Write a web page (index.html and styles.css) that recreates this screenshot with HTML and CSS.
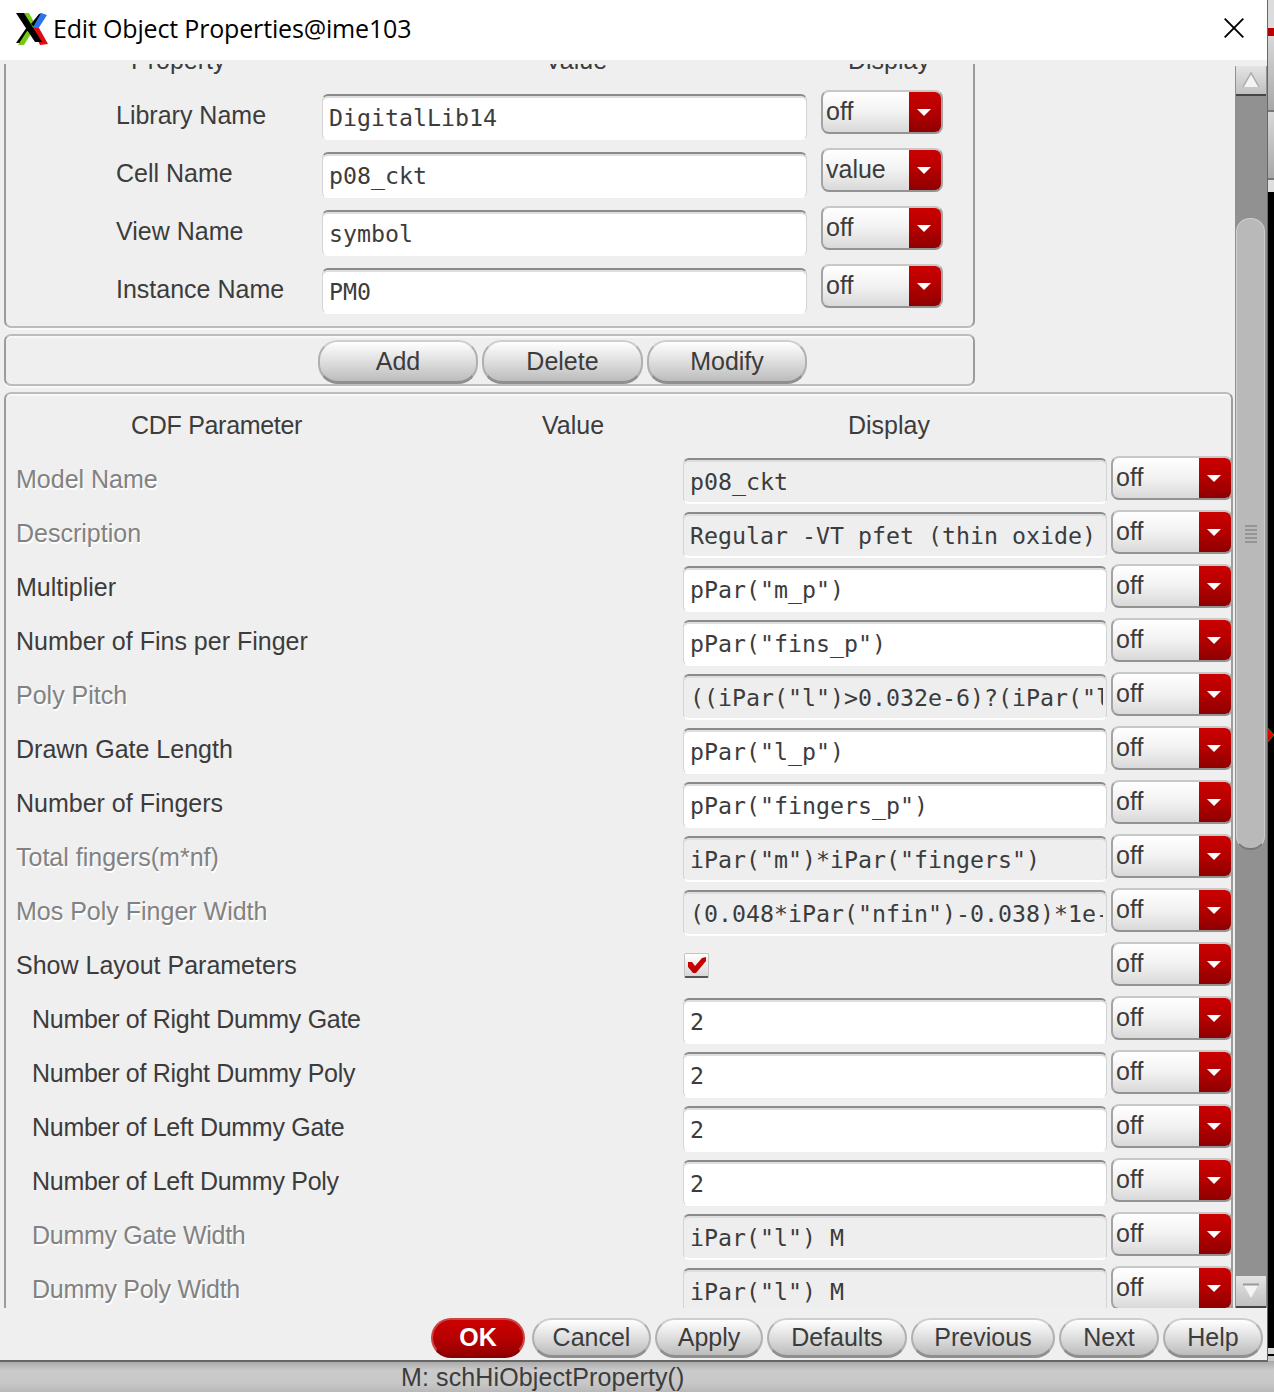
FILE: index.html
```
<!DOCTYPE html>
<html lang="en">
<head>
    <meta charset="UTF-8">
    <title>Edit Object Properties</title>
    <link rel="stylesheet" href="styles.css">
</head>
<body>
    <div class="desktop">
        <!-- Main window showing behind the dialog -->
        <div class="behind">
            <div class="behind-menu"></div>
            <div class="behind-red"></div>
            <div class="behind-tools"></div>
            <div class="behind-tools second"></div>
            <div class="behind-gap"></div>
            <div class="behind-canvas">
                <svg width="8" height="20" viewBox="0 0 8 20"><path d="M0 1L8 10L0 19Z" fill="#e00000" stroke="#2c8a3c"/></svg>
            </div>
            <div class="behind-edge"></div>
        </div>
        <div class="status-bar">M: schHiObjectProperty()</div>

        <div class="window">
            <div class="title-bar">
                <svg class="logo" width="32" height="32" viewBox="0 0 32 32">
                    <path d="M6 0H13L19 11L15 16Z" fill="#74cc10"/>
                    <path d="M0 30L11 14L15 20L6 30Z" fill="#000"/>
                    <path d="M11 18L16 19L8 32H2Z" fill="#74cc10"/>
                    <path d="M23 1L26 0L18 14L15 11Z" fill="#000"/>
                    <path d="M25 0L31 2L22 16H16Z" fill="#2a74ee"/>
                    <path d="M16 15H23L32 31L24 32Z" fill="#e00b12"/>
                    <path d="M0 0H8L26 29H19Z" fill="#000"/>
                </svg>
                <span class="title">Edit Object Properties@ime103</span>
                <svg class="close" width="20" height="20" viewBox="0 0 20 20"><path d="M.7.7L19.3 19.3M19.3.7L.7 19.3" stroke="#000" stroke-width="1.9"/></svg>
            </div>

            <div class="content">
                <div class="scroll-area">
                    <!-- Instance properties -->
                    <div class="group props">
                        <div class="head"><span>Property</span><span class="head-value">Value</span><span>Display</span></div>
                        <div class="row"><label>Library Name</label><div class="field"><span>DigitalLib14</span></div><div class="combo">off<i></i></div></div>
                        <div class="row"><label>Cell Name</label><div class="field"><span>p08_ckt</span></div><div class="combo">value<i></i></div></div>
                        <div class="row"><label>View Name</label><div class="field"><span>symbol</span></div><div class="combo">off<i></i></div></div>
                        <div class="row"><label>Instance Name</label><div class="field"><span>PM0</span></div><div class="combo">off<i></i></div></div>
                    </div>

                    <div class="group actions">
                        <button>Add</button>
                        <button>Delete</button>
                        <button>Modify</button>
                    </div>

                    <!-- CDF parameters -->
                    <div class="group cdf">
                        <div class="head"><span>CDF Parameter</span><span>Value</span><span>Display</span></div>
                        <div class="row disabled"><label>Model Name</label><div class="field"><span>p08_ckt</span></div><div class="combo">off<i></i></div></div>
                        <div class="row disabled"><label>Description</label><div class="field"><span>Regular -VT pfet (thin oxide)</span></div><div class="combo">off<i></i></div></div>
                        <div class="row"><label>Multiplier</label><div class="field"><span>pPar("m_p")</span></div><div class="combo">off<i></i></div></div>
                        <div class="row"><label>Number of Fins per Finger</label><div class="field"><span>pPar("fins_p")</span></div><div class="combo">off<i></i></div></div>
                        <div class="row disabled"><label>Poly Pitch</label><div class="field"><span>((iPar("l")&gt;0.032e-6)?(iPar("l</span></div><div class="combo">off<i></i></div></div>
                        <div class="row"><label>Drawn Gate Length</label><div class="field"><span>pPar("l_p")</span></div><div class="combo">off<i></i></div></div>
                        <div class="row"><label>Number of Fingers</label><div class="field"><span>pPar("fingers_p")</span></div><div class="combo">off<i></i></div></div>
                        <div class="row disabled"><label>Total fingers(m*nf)</label><div class="field"><span>iPar("m")*iPar("fingers")</span></div><div class="combo">off<i></i></div></div>
                        <div class="row disabled"><label>Mos Poly Finger Width</label><div class="field"><span>(0.048*iPar("nfin")-0.038)*1e-</span></div><div class="combo">off<i></i></div></div>
                        <div class="row"><label>Show Layout Parameters</label>
                            <div class="check"><svg width="18" height="17" viewBox="0 0 18 17"><path d="M0 5L4 5L7 9L14 1L18 0V4L8 16H5L0 10Z" fill="#c80000"/></svg></div>
                            <div class="combo">off<i></i></div></div>
                        <div class="row sub"><label>Number of Right Dummy Gate</label><div class="field"><span>2</span></div><div class="combo">off<i></i></div></div>
                        <div class="row sub"><label>Number of Right Dummy Poly</label><div class="field"><span>2</span></div><div class="combo">off<i></i></div></div>
                        <div class="row sub"><label>Number of Left Dummy Gate</label><div class="field"><span>2</span></div><div class="combo">off<i></i></div></div>
                        <div class="row sub"><label>Number of Left Dummy Poly</label><div class="field"><span>2</span></div><div class="combo">off<i></i></div></div>
                        <div class="row sub disabled"><label>Dummy Gate Width</label><div class="field"><span>iPar("l") M</span></div><div class="combo">off<i></i></div></div>
                        <div class="row sub disabled"><label>Dummy Poly Width</label><div class="field"><span>iPar("l") M</span></div><div class="combo">off<i></i></div></div>
                    </div>
                </div>

                <div class="scrollbar">
                    <div class="arrow"><svg width="18" height="16" viewBox="0 0 18 16"><path d="M9 1L17 15H1Z" fill="#f4f4f4"/><path d="M1 15L9 1L17 15" fill="none" stroke="#aaa" stroke-width="1.5"/></svg></div>
                    <div class="thumb"><span></span><span></span><span></span><span></span><span></span></div>
                    <div class="arrow down"><svg width="18" height="16" viewBox="0 0 18 16"><path d="M1 1H17L9 15Z" fill="#f4f4f4"/><path d="M1 1.5H17" stroke="#999" stroke-width="2"/></svg></div>
                </div>
            </div>

            <div class="buttons">
                <button class="ok">OK</button>
                <button class="cancel">Cancel</button>
                <button class="apply">Apply</button>
                <button class="defaults">Defaults</button>
                <button class="previous">Previous</button>
                <button class="next">Next</button>
                <button class="help">Help</button>
            </div>
        </div>
    </div>
</body>
</html>
```
FILE: styles.css
```
* {
    box-sizing: border-box;
}

body {
    margin: 0;
    font-family: "Liberation Sans", Arial, sans-serif;
    font-size: 25px;
    color: #3c3c3c;
}

.desktop {
    position: relative;
    width: 1274px;
    height: 1392px;
    overflow: hidden;
    background: #c8c8c8;
}

/* Window behind the dialog */
.behind {
    display: flex;
    flex-direction: column;
    width: 8px;
    height: 1361px;
    margin-left: auto;
}

.behind-menu {
    height: 28px;
    background: #dcdcdc;
}

.behind-red {
    height: 8px;
    background: #b80000;
}

.behind-tools {
    height: 76px;
    background: linear-gradient(#d8d8d8, #a8a8a8);
    border-bottom: 2px solid #777;
}

.behind-tools.second {
    height: 68px;
}

.behind-gap {
    height: 12px;
    background: #dedede;
}

.behind-canvas {
    height: 1156px;
    padding-top: 533px;
    background: #000;
}

.behind-canvas svg {
    display: block;
}

.behind-edge {
    height: 8px;
    background: #d8d8d8;
    border-bottom: 2px solid #000;
}

.status-bar {
    height: 31px;
    padding-left: 401px;
    line-height: 33px;
    letter-spacing: 0.12px;
    background: linear-gradient(#a8a8a8, #cacaca 30%, #c8c8c8 70%, #b8b8b8);
}

/* Dialog */
.window {
    position: absolute;
    left: 0;
    top: 0;
    width: 1268px;
    height: 1362px;
    background: #efefef;
    border-right: 1px solid #666;
    border-bottom: 2px solid #666;
}

.title-bar {
    display: flex;
    align-items: center;
    height: 60px;
    padding: 0 23px 3px 16px;
    background: #fff;
}

.logo {
    margin-right: 5px;
}

.title {
    padding-bottom: 2px;
    font-family: "Open Sans", "Noto Sans", sans-serif;
    font-size: 25px;
    letter-spacing: -0.17px;
    color: #000;
}

.close {
    margin: 0 0 1px auto;
}

.content {
    display: flex;
    height: 1248px;
    padding-top: 4px;
}

.scroll-area {
    width: 1235px;
    height: 1244px;
    padding-left: 4px;
    overflow: hidden;
}

/* Group boxes */
.group {
    border: 2px solid #bcbcbc;
    border-left-color: #9c9c9c;
    border-right-color: #9c9c9c;
    border-radius: 7px;
    box-shadow: 0 2px 0 #f8f8f8, inset 0 2px 0 #f8f8f8;
}

.props {
    width: 971px;
    height: 264px;
    border-top: 0;
    border-radius: 0 0 7px 7px;
    box-shadow: 0 2px 0 #f8f8f8;
}

.actions {
    display: flex;
    gap: 4px;
    width: 971px;
    height: 52px;
    margin-top: 6px;
    padding: 4px 0 0 312px;
}

.cdf {
    width: 1229px;
    height: 960px;
    margin-top: 6px;
    padding-top: 5px;
}

.head {
    display: grid;
    grid-template-columns: 411px 306px 100px;
    padding-left: 125px;
    height: 54px;
    line-height: 52px;
}

.cdf .head span:first-child {
    letter-spacing: -0.3px;
}

/* The first header row is scrolled half out of view */
.props .head {
    height: 23px;
    line-height: 28px;
}

.props .head span {
    margin-top: -18px;
}

.props .head .head-value {
    padding-left: 3px;
}

/* Rows */
.row {
    display: grid;
    grid-template-columns: 663px 424px 122px;
    column-gap: 4px;
    align-items: start;
    height: 54px;
    padding-left: 10px;
}

.props .row {
    grid-template-columns: 206px 485px 122px;
    column-gap: 0;
    height: 58px;
    padding-left: 110px;
}

.props .combo {
    margin-left: 14px;
}

label {
    line-height: 52px;
    white-space: nowrap;
}

.props label {
    line-height: 56px;
}

.sub label {
    padding-left: 16px;
    letter-spacing: -0.29px;
}

.disabled label {
    color: #828282;
    text-shadow: 1px 2px 0 #fff;
}

.field {
    height: 46px;
    margin-top: 5px;
    padding: 0 3px 0 6px;
    border: 1px solid #d4d4d4;
    border-top: 2px solid #8a8a8a;
    border-bottom: 1px solid #fff;
    border-radius: 6px;
    box-shadow: inset 0 2px 0 #dedede;
    background: #fff;
    font-family: "DejaVu Sans Mono", monospace;
    font-size: 23.25px;
    line-height: 43px;
    white-space: pre;
}

.field span {
    display: block;
    overflow: hidden;
}

.props .field {
    margin-top: 7px;
}

.disabled .field {
    background: #eee;
    border-bottom-width: 2px;
}

.combo {
    display: flex;
    justify-content: space-between;
    width: 122px;
    height: 44px;
    margin-top: 3px;
    padding-left: 3px;
    line-height: 39px;
    border: 2px solid #a4a4a4;
    border-top-color: #c8c8c8;
    border-bottom-color: #939393;
    border-radius: 8px;
    background: linear-gradient(#fff, #f2f2f2 50%, #d9d9d9);
    overflow: hidden;
}

.combo i {
    display: flex;
    align-items: center;
    justify-content: center;
    width: 32px;
    padding-right: 2px;
    background: linear-gradient(#cc0000, #b40000 50%, #8e0000);
}

.combo i::after {
    content: "";
    border: 7px solid transparent;
    border-top: 7px solid #fff;
    border-bottom: 0;
}

.check {
    display: flex;
    align-items: center;
    justify-content: center;
    width: 25px;
    height: 25px;
    margin: 14px 0 0 1px;
    border: 1px solid #c4c4c4;
    border-bottom: 2px solid #555;
    border-radius: 2px;
    background: linear-gradient(#fff, #d8d8d8);
}

/* Scrollbar */
.scrollbar {
    display: flex;
    flex-direction: column;
    align-items: center;
    width: 32px;
    height: 1242px;
    margin-top: 2px;
    padding-right: 1px;
    background: #919191;
}

.arrow {
    display: flex;
    align-items: center;
    justify-content: center;
    width: 30px;
    height: 30px;
    background: linear-gradient(#e4e4e4, #c0c0c0);
    border-bottom: 2px solid #444;
}

.arrow.down {
    height: 32px;
    margin-top: auto;
}

.thumb {
    display: flex;
    flex-direction: column;
    align-items: center;
    justify-content: center;
    gap: 2px;
    width: 29px;
    height: 632px;
    margin-top: 122px;
    border: 1px solid #cfcfcf;
    border-bottom: 2px solid #777;
    border-radius: 14px;
    background: #b9b9b9;
}

.thumb span {
    width: 12px;
    height: 2px;
    background: #949494;
}

/* Push buttons */
button {
    width: 160px;
    height: 44px;
    padding: 0;
    border: 2px solid #b0b0b0;
    border-top-color: #cecece;
    border-bottom: 3px solid #8f8f8f;
    border-radius: 20px;
    background: linear-gradient(#fff, #e2e2e2 45%, #bcbcbc);
    font: inherit;
    color: #3c3c3c;
}

.actions button:nth-child(2) {
    width: 161px;
}

.buttons {
    display: flex;
    justify-content: flex-end;
    gap: 4px;
    padding: 10px 4px 0 0;
}

.buttons button {
    height: 40px;
}

.buttons .ok {
    width: 94px;
    margin-right: 3px;
    border-color: #c44 #c44 #800;
    background: linear-gradient(#cc0000, #b80000 50%, #960000);
    color: #fff;
    font-weight: bold;
}

.buttons .cancel { width: 119px; }
.buttons .apply { width: 108px; }
.buttons .defaults { width: 140px; }
.buttons .previous { width: 144px; }
.buttons .next { width: 100px; }
.buttons .help { width: 100px; }
```
